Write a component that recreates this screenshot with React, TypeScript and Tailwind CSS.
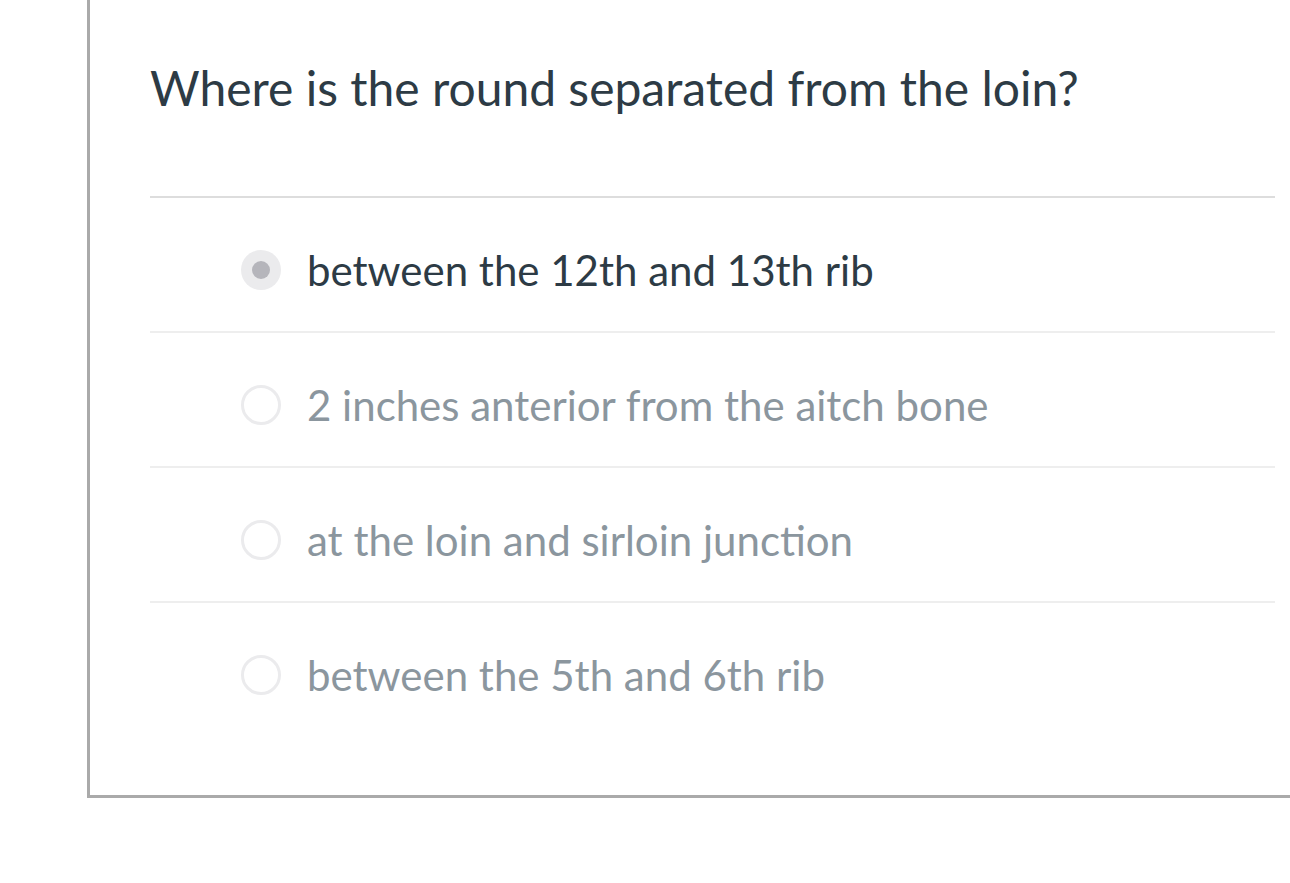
import React from 'react';

const options = [
  { label: 'between the 12th and 13th rib', selected: true },
  { label: '2 inches anterior from the aitch bone', selected: false },
  { label: 'at the loin and sirloin junction', selected: false },
  { label: 'between the 5th and 6th rib', selected: false },
];

const Radio: React.FC<{ selected: boolean }> = ({ selected }) =>
  selected ? (
    <span className="flex h-[40px] w-[40px] shrink-0 items-center justify-center rounded-full bg-[#ebebed]">
      <span className="h-[18px] w-[18px] rounded-full bg-[#b5b5bb]" />
    </span>
  ) : (
    <span className="h-[40px] w-[40px] shrink-0 rounded-full border-[3px] border-[#ebebed] bg-white" />
  );

export default function App() {
  return (
    <div
      className="h-[883px] w-[1290px] overflow-hidden bg-white pl-[87px]"
      style={{ fontFamily: 'Lato, "Noto Sans", sans-serif' }}
    >
      <div className="w-[1240px] border-b-[3px] border-l-[3px] border-[#aaaaaa] pb-[59px] pl-[60px]">
        <h1 className="pt-[58px] text-[48px] font-normal leading-[60px] text-[#2d3b45]">
          Where is the round separated from the loin?
        </h1>
        <div className="mt-[78px] w-[1125px] border-t-2 border-[#dddddd]">
          {options.map((o, i) => (
            <div
              key={i}
              className={`flex items-center gap-[26px] pb-[41px] pl-[91px] pt-[52px] ${
                i < options.length - 1 ? 'border-b-2 border-[#eeeeee]' : ''
              }`}
            >
              <Radio selected={o.selected} />
              <span
                className={`text-[42px] leading-[40px] ${
                  o.selected ? 'text-[#2d3b45]' : 'text-[#8b969e]'
                }`}
              >
                {o.label}
              </span>
            </div>
          ))}
        </div>
      </div>
    </div>
  );
}
